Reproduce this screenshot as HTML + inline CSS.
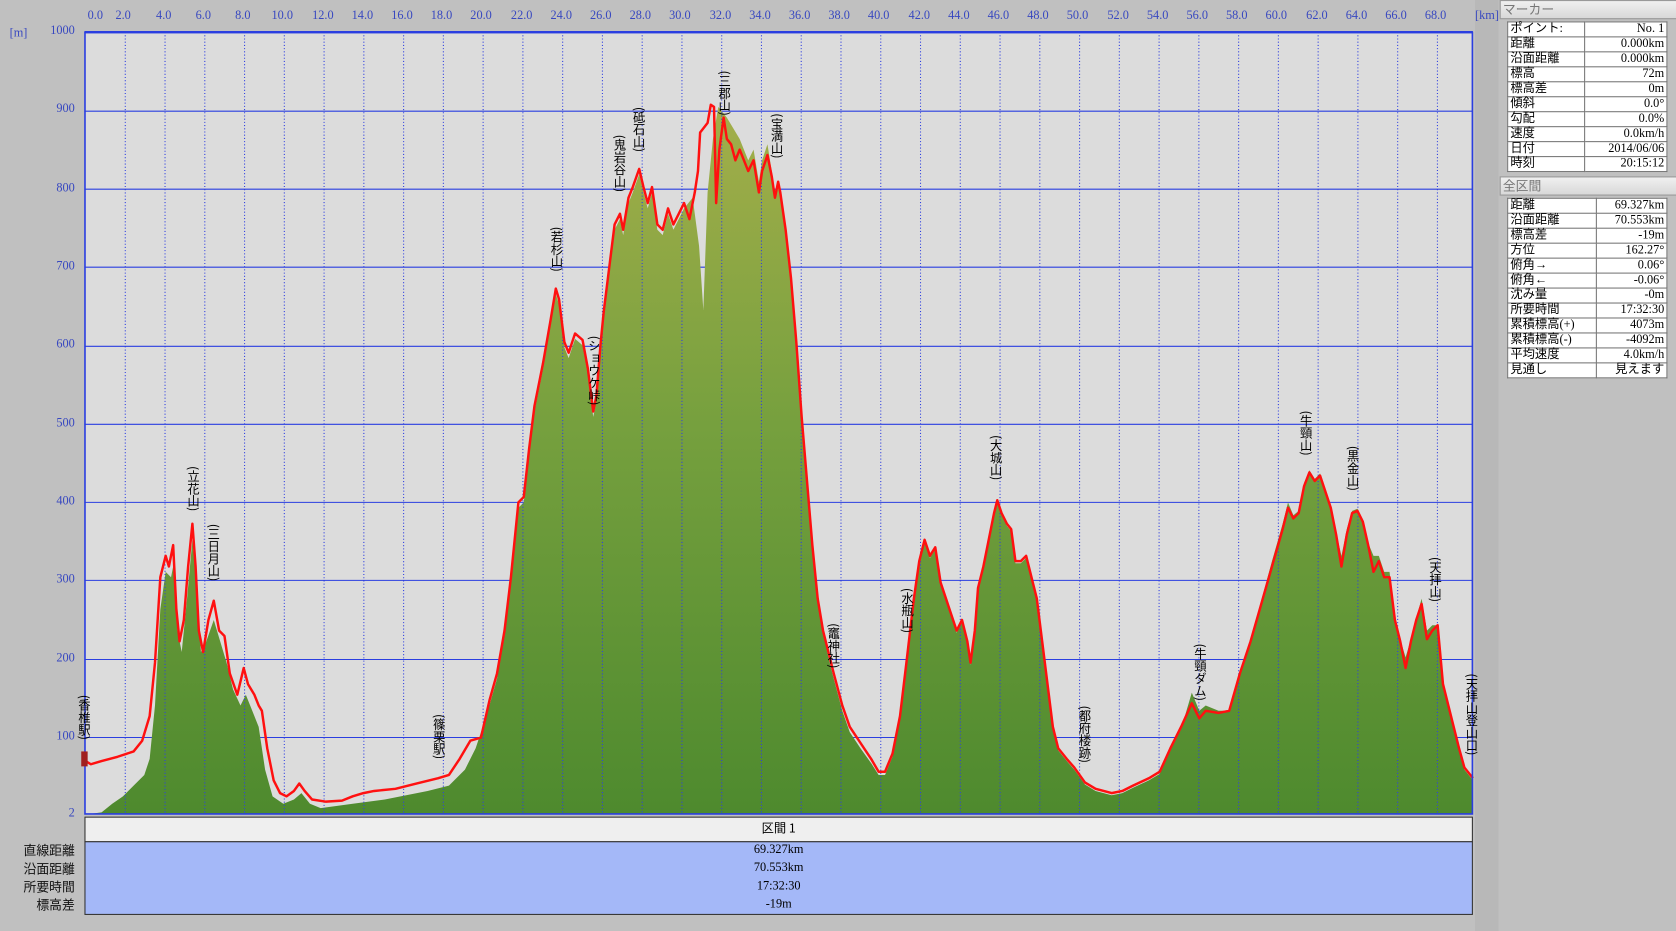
<!DOCTYPE html>
<html><head><meta charset="utf-8"><style>
html,body{margin:0;padding:0;background:#c0c0c0;overflow:hidden}
#w{position:absolute;left:0;top:0;width:1568px;height:871px;transform:scale(1.06888,1.06888);transform-origin:0 0;font-family:"Liberation Sans","Noto Sans CJK JP",sans-serif;font-size:12px}
.v{position:absolute;writing-mode:vertical-rl;font-size:11.5px;line-height:12px;color:#000;transform:translateX(-50%);letter-spacing:0;font-family:"Noto Sans CJK JP",sans-serif}
.ax{position:absolute;color:#3848c0;font-size:11.5px;font-family:"Liberation Serif","Noto Sans CJK JP",serif}
.tb{position:absolute;left:1410px;width:150px;background:#fff;border:1px solid #555;border-collapse:collapse;font-size:11.5px;font-family:"Liberation Serif","Noto Sans CJK JP",serif}
.tb td{border:1px solid #777;height:13px;padding:0 2px;line-height:13px}
.tb td+td{text-align:right}
.hd{position:absolute;left:1403px;width:162px;height:16px;background:linear-gradient(#f0f0f0,#d8d8d8);border:1px solid #999;color:#777;font-size:12px;line-height:16px;padding-left:2px;font-family:"Noto Sans CJK JP",sans-serif}
.bl{position:absolute;right:1498px;width:90px;text-align:right;font-size:12px;line-height:17px;color:#111;font-family:"Noto Sans CJK JP",sans-serif}
.bv{position:absolute;left:79px;width:1299px;text-align:center;font-size:11.5px;line-height:17px;font-family:"Liberation Serif",serif}
</style></head><body><div id="w">
<svg width="1568" height="871" style="position:absolute;left:0;top:0">
<defs><linearGradient id="g" gradientUnits="userSpaceOnUse" x1="0" y1="100" x2="0" y2="762"><stop offset="0" stop-color="#a3ae4a"/><stop offset="0.45" stop-color="#76a03e"/><stop offset="1" stop-color="#4e8a2e"/></linearGradient></defs>
<rect x="79" y="30" width="1299" height="732" fill="#dcdcdc"/>
<g stroke="#2a3ee0" stroke-width="1">
<line x1="79" y1="104" x2="1378" y2="104"/><line x1="79" y1="177" x2="1378" y2="177"/><line x1="79" y1="250" x2="1378" y2="250"/><line x1="79" y1="324" x2="1378" y2="324"/><line x1="79" y1="397" x2="1378" y2="397"/><line x1="79" y1="470" x2="1378" y2="470"/><line x1="79" y1="543" x2="1378" y2="543"/><line x1="79" y1="617" x2="1378" y2="617"/><line x1="79" y1="690" x2="1378" y2="690"/>
</g>
<polygon fill="url(#g)" points="80,762 95,760 105,752 115,745 125,735 135,725 140,710 145,660 150,570 155,535 160,540 163,525 166,590 170,610 175,560 180,505 184,550 188,610 193,600 200,580 206,600 212,620 218,645 225,660 230,650 236,665 242,680 248,720 255,745 265,752 275,748 282,742 290,752 300,756 330,752 360,748 400,740 420,735 435,720 445,700 455,670 465,635 472,595 478,545 485,475 490,470 495,425 500,385 508,345 515,305 520,275 523,285 528,325 532,335 538,317 545,323 550,350 555,390 558,375 562,325 565,295 570,255 575,215 580,205 583,220 588,190 592,180 598,163 602,180 606,195 610,180 615,215 620,220 625,200 630,215 635,205 640,195 648,185 654,230 658,290 662,180 667,130 672,100 680,110 686,120 692,130 700,150 705,140 710,170 713,150 718,135 722,160 725,180 728,170 730,180 735,215 740,260 745,320 750,390 755,450 760,510 765,560 770,592 775,615 780,635 788,665 795,685 805,700 815,714 822,725 828,725 835,708 842,672 848,622 855,562 860,527 865,507 870,522 875,514 880,547 885,562 890,577 895,592 900,582 905,602 908,622 912,592 915,552 920,532 925,507 930,482 933,470 937,482 942,492 946,497 950,527 955,527 960,522 965,542 970,562 975,602 980,642 985,682 990,702 998,712 1005,720 1015,734 1025,740 1040,744 1050,742 1060,737 1075,730 1085,724 1095,702 1105,682 1115,648 1122,665 1128,660 1140,665 1150,665 1160,630 1170,600 1180,562 1190,525 1200,490 1205,470 1210,482 1215,478 1220,452 1225,440 1230,448 1235,443 1240,458 1245,473 1250,498 1255,520 1260,495 1265,478 1270,476 1275,486 1280,508 1285,520 1290,520 1295,535 1300,535 1305,580 1310,598 1315,615 1320,598 1325,578 1330,560 1335,590 1340,585 1345,585 1350,640 1355,662 1360,682 1365,702 1370,720 1378,730 1378,762"/>
<g stroke="#3040e0" stroke-width="1" stroke-dasharray="1,2">
<line x1="117.2" y1="30" x2="117.2" y2="762"/><line x1="154.4" y1="30" x2="154.4" y2="762"/><line x1="191.6" y1="30" x2="191.6" y2="762"/><line x1="228.8" y1="30" x2="228.8" y2="762"/><line x1="266" y1="30" x2="266" y2="762"/><line x1="303.2" y1="30" x2="303.2" y2="762"/><line x1="340.4" y1="30" x2="340.4" y2="762"/><line x1="377.6" y1="30" x2="377.6" y2="762"/><line x1="414.8" y1="30" x2="414.8" y2="762"/><line x1="452" y1="30" x2="452" y2="762"/><line x1="489.2" y1="30" x2="489.2" y2="762"/><line x1="526.4" y1="30" x2="526.4" y2="762"/><line x1="563.6" y1="30" x2="563.6" y2="762"/><line x1="600.8" y1="30" x2="600.8" y2="762"/><line x1="638" y1="30" x2="638" y2="762"/><line x1="675.2" y1="30" x2="675.2" y2="762"/><line x1="712.4" y1="30" x2="712.4" y2="762"/><line x1="749.6" y1="30" x2="749.6" y2="762"/><line x1="786.8" y1="30" x2="786.8" y2="762"/><line x1="824" y1="30" x2="824" y2="762"/><line x1="861.2" y1="30" x2="861.2" y2="762"/><line x1="898.4" y1="30" x2="898.4" y2="762"/><line x1="935.6" y1="30" x2="935.6" y2="762"/><line x1="972.8" y1="30" x2="972.8" y2="762"/><line x1="1010" y1="30" x2="1010" y2="762"/><line x1="1047.2" y1="30" x2="1047.2" y2="762"/><line x1="1084.4" y1="30" x2="1084.4" y2="762"/><line x1="1121.6" y1="30" x2="1121.6" y2="762"/><line x1="1158.8" y1="30" x2="1158.8" y2="762"/><line x1="1196" y1="30" x2="1196" y2="762"/><line x1="1233.2" y1="30" x2="1233.2" y2="762"/><line x1="1270.4" y1="30" x2="1270.4" y2="762"/><line x1="1307.6" y1="30" x2="1307.6" y2="762"/><line x1="1344.8" y1="30" x2="1344.8" y2="762"/>
</g>
<polyline fill="none" stroke="#ff1010" stroke-width="2.3" stroke-linejoin="round" points="80,712 85,715 95,712 110,708 125,703 133,693 140,670 145,620 150,540 155,520 158,530 162,510 165,570 168,600 172,580 176,530 180,490 183,530 186,590 190,610 195,580 200,562 205,590 210,595 215,630 222,650 228,625 232,640 238,650 242,660 245,665 250,700 256,730 262,742 268,745 275,740 280,733 285,740 292,748 305,750 320,749 330,745 340,742 350,740 370,738 390,733 410,728 420,725 430,710 440,693 450,690 458,655 465,630 472,590 478,540 485,470 490,465 495,420 500,380 508,340 515,300 520,270 523,280 528,320 532,330 538,312 545,318 550,345 555,385 558,370 562,320 565,290 570,250 575,210 580,200 583,215 588,185 592,175 598,158 602,175 606,190 610,175 615,210 620,215 625,195 630,210 635,200 640,190 645,205 650,180 653,160 655,124 662,115 665,98 668,100 670,190 673,140 677,110 680,130 684,135 688,150 692,140 696,150 700,160 705,150 710,180 713,160 718,145 722,165 725,185 728,170 730,180 735,215 740,260 745,320 750,390 755,450 760,510 765,560 770,590 775,610 780,630 788,660 795,680 805,695 815,710 822,722 828,722 835,705 842,670 848,620 855,560 860,525 865,505 870,520 875,512 880,545 885,560 890,575 895,590 900,580 905,600 908,620 912,590 915,550 920,530 925,505 930,480 933,468 937,480 942,490 946,495 950,525 955,525 960,520 965,540 970,560 975,600 980,640 985,680 990,700 998,710 1005,718 1015,732 1025,738 1040,742 1050,740 1060,735 1075,728 1085,722 1095,700 1105,680 1115,658 1122,672 1128,665 1140,667 1150,665 1160,630 1170,600 1180,565 1190,530 1200,495 1205,475 1210,485 1215,480 1220,455 1225,442 1230,450 1235,445 1240,460 1245,475 1250,500 1255,530 1260,500 1265,480 1270,478 1275,488 1280,510 1285,535 1290,525 1295,540 1300,540 1305,580 1310,600 1315,625 1320,600 1325,580 1330,565 1335,598 1340,590 1345,585 1350,640 1355,660 1360,680 1365,700 1370,718 1378,728"/>
<rect x="79.5" y="30.5" width="1298" height="731" fill="none" stroke="#2a3ee0" stroke-width="1.5"/>
<line x1="79" y1="30" x2="1378" y2="30" stroke="#2a3ee0" stroke-width="2"/>
<rect x="1380" y="0" width="22" height="871" fill="#b8b8b8"/>
<rect x="76" y="703" width="6" height="14" fill="#a02020"/>
<rect x="79.5" y="764.5" width="1298" height="23" fill="#efefef" stroke="#333"/>
<rect x="79.5" y="787.5" width="1298" height="68" fill="#a4b8f8" stroke="#333"/>
</svg>
<div class="ax" style="left:9px;top:25px">[m]</div>
<div class="ax" style="left:1380px;top:9px">[km]</div>
<div class="ax" style="left:82px;top:9px">0.0</div><div class="ax" style="left:108px;top:9px">2.0</div><div class="ax" style="left:146px;top:9px">4.0</div><div class="ax" style="left:183px;top:9px">6.0</div><div class="ax" style="left:220px;top:9px">8.0</div><div class="ax" style="left:254px;top:9px">10.0</div><div class="ax" style="left:292px;top:9px">12.0</div><div class="ax" style="left:329px;top:9px">14.0</div><div class="ax" style="left:366px;top:9px">16.0</div><div class="ax" style="left:403px;top:9px">18.0</div><div class="ax" style="left:440px;top:9px">20.0</div><div class="ax" style="left:478px;top:9px">22.0</div><div class="ax" style="left:515px;top:9px">24.0</div><div class="ax" style="left:552px;top:9px">26.0</div><div class="ax" style="left:589px;top:9px">28.0</div><div class="ax" style="left:626px;top:9px">30.0</div><div class="ax" style="left:664px;top:9px">32.0</div><div class="ax" style="left:701px;top:9px">34.0</div><div class="ax" style="left:738px;top:9px">36.0</div><div class="ax" style="left:775px;top:9px">38.0</div><div class="ax" style="left:812px;top:9px">40.0</div><div class="ax" style="left:850px;top:9px">42.0</div><div class="ax" style="left:887px;top:9px">44.0</div><div class="ax" style="left:924px;top:9px">46.0</div><div class="ax" style="left:961px;top:9px">48.0</div><div class="ax" style="left:998px;top:9px">50.0</div><div class="ax" style="left:1036px;top:9px">52.0</div><div class="ax" style="left:1073px;top:9px">54.0</div><div class="ax" style="left:1110px;top:9px">56.0</div><div class="ax" style="left:1147px;top:9px">58.0</div><div class="ax" style="left:1184px;top:9px">60.0</div><div class="ax" style="left:1222px;top:9px">62.0</div><div class="ax" style="left:1259px;top:9px">64.0</div><div class="ax" style="left:1296px;top:9px">66.0</div><div class="ax" style="left:1333px;top:9px">68.0</div>
<div class="ax" style="left:40px;top:23px;width:30px;text-align:right">1000</div><div class="ax" style="left:40px;top:96px;width:30px;text-align:right">900</div><div class="ax" style="left:40px;top:170px;width:30px;text-align:right">800</div><div class="ax" style="left:40px;top:243px;width:30px;text-align:right">700</div><div class="ax" style="left:40px;top:316px;width:30px;text-align:right">600</div><div class="ax" style="left:40px;top:390px;width:30px;text-align:right">500</div><div class="ax" style="left:40px;top:463px;width:30px;text-align:right">400</div><div class="ax" style="left:40px;top:536px;width:30px;text-align:right">300</div><div class="ax" style="left:40px;top:610px;width:30px;text-align:right">200</div><div class="ax" style="left:40px;top:683px;width:30px;text-align:right">100</div><div class="ax" style="left:40px;top:755px;width:30px;text-align:right">2</div>
<div class="v" style="left:79px;top:650px">(香椎駅)</div>
<div class="v" style="left:181px;top:436px">(立花山)</div>
<div class="v" style="left:200px;top:490px">(三日月山)</div>
<div class="v" style="left:521px;top:212px">(若杉山)</div>
<div class="v" style="left:556px;top:314px">(ショウケ峠)</div>
<div class="v" style="left:580px;top:126px">(鬼岩谷山)</div>
<div class="v" style="left:598px;top:100px">(砥石山)</div>
<div class="v" style="left:678px;top:66px">(三郡山)</div>
<div class="v" style="left:727px;top:106px">(宝満山)</div>
<div class="v" style="left:411px;top:668px">(篠栗駅)</div>
<div class="v" style="left:780px;top:583px">(竈神社)</div>
<div class="v" style="left:849px;top:550px">(水瓶山)</div>
<div class="v" style="left:932px;top:407px">(大城山)</div>
<div class="v" style="left:1015px;top:660px">(都府楼跡)</div>
<div class="v" style="left:1123px;top:602px">(牛頸ダム)</div>
<div class="v" style="left:1222px;top:384px">(牛頸山)</div>
<div class="v" style="left:1266px;top:417px">(黒金山)</div>
<div class="v" style="left:1343px;top:521px">(天拝山)</div>
<div class="v" style="left:1377px;top:630px">(天拝山登山口)</div>
<div class="bv" style="top:767px;font-family:'Noto Sans CJK JP',sans-serif;font-size:11.5px">区間 1</div>
<div class="bl" style="top:787px">直線距離</div><div class="bl" style="top:804px">沿面距離</div><div class="bl" style="top:821px">所要時間</div><div class="bl" style="top:838px">標高差</div>
<div class="bv" style="top:787px">69.327km</div><div class="bv" style="top:804px">70.553km</div><div class="bv" style="top:821px">17:32:30</div><div class="bv" style="top:838px">-19m</div>
<div class="hd" style="top:0">マーカー</div>
<table class="tb" style="top:20px">
<tr><td>ポイント:</td><td>No. 1</td></tr><tr><td>距離</td><td>0.000km</td></tr><tr><td>沿面距離</td><td>0.000km</td></tr><tr><td>標高</td><td>72m</td></tr><tr><td>標高差</td><td>0m</td></tr><tr><td>傾斜</td><td>0.0°</td></tr><tr><td>勾配</td><td>0.0%</td></tr><tr><td>速度</td><td>0.0km/h</td></tr><tr><td>日付</td><td>2014/06/06</td></tr><tr><td>時刻</td><td>20:15:12</td></tr>
</table>
<div class="hd" style="top:165px">全区間</div>
<table class="tb" style="top:185px">
<tr><td>距離</td><td>69.327km</td></tr><tr><td>沿面距離</td><td>70.553km</td></tr><tr><td>標高差</td><td>-19m</td></tr><tr><td>方位</td><td>162.27°</td></tr><tr><td>俯角→</td><td>0.06°</td></tr><tr><td>俯角←</td><td>-0.06°</td></tr><tr><td>沈み量</td><td>-0m</td></tr><tr><td>所要時間</td><td>17:32:30</td></tr><tr><td>累積標高(+)</td><td>4073m</td></tr><tr><td>累積標高(-)</td><td>-4092m</td></tr><tr><td>平均速度</td><td>4.0km/h</td></tr><tr><td>見通し</td><td>見えます</td></tr>
</table>
</div></body></html>
